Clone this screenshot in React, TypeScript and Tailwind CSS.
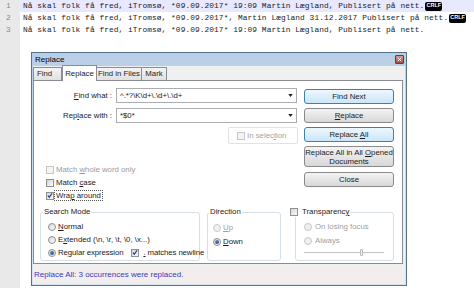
import React from "react";

const sans = "font-['Liberation_Sans',Arial,sans-serif]";
const mono = "font-['Liberation_Mono','Courier_New',monospace]";

function U({ children }: { children: React.ReactNode }) {
  return <span className="underline underline-offset-[1px] decoration-[0.5px]">{children}</span>;
}

function Checkbox({ checked, disabled }: { checked?: boolean; disabled?: boolean }) {
  return (
    <span
      className={`inline-flex w-[8px] h-[8px] shrink-0 items-center justify-center border ${
        disabled
          ? "border-[#c6c6c6] bg-[#f4f4f4]"
          : "border-[#8e8f8f] bg-gradient-to-br from-[#d6d6d6] to-[#fafafa]"
      }`}
    >
      {checked && (
        <svg viewBox="0 0 8 8" className="w-[7px] h-[7px]">
          <path d="M1.3 4.3 L3 6.3 L6.7 1.2" stroke="#1d3b8c" strokeWidth="1.5" fill="none" />
        </svg>
      )}
    </span>
  );
}

function Radio({ checked, disabled }: { checked?: boolean; disabled?: boolean }) {
  return (
    <span
      className={`inline-flex w-[8px] h-[8px] shrink-0 items-center justify-center rounded-full border ${
        disabled
          ? "border-[#c8c8c8] bg-[#f0f0f0]"
          : "border-[#8e8f8f] bg-gradient-to-br from-[#d8d8d8] to-[#fbfbfb]"
      }`}
    >
      {checked && <span className="w-[4px] h-[4px] rounded-full bg-gradient-to-br from-[#6f9bd0] to-[#1b3f7a]" />}
    </span>
  );
}

function Btn({
  children,
  primary,
  tall,
}: {
  children: React.ReactNode;
  primary?: boolean;
  tall?: boolean;
}) {
  return (
    <div
      className={`flex items-center justify-center text-center rounded-[3px] border leading-[9px] ${
        tall ? "h-[21px]" : "h-[15px]"
      } ${
        primary
          ? "border-[#3c7fb1] bg-gradient-to-b from-[#eef7fd] to-[#c9e6f8]"
          : "border-[#8a8a8a] bg-gradient-to-b from-[#f4f4f4] to-[#d8d8d8]"
      }`}
    >
      {children}
    </div>
  );
}

function Combo({ value }: { value: string }) {
  return (
    <div className="flex items-center w-[181px] h-[15px] border border-[#abadb3] bg-white pl-[3px] pr-[3px]">
      <span className="flex-1 whitespace-nowrap">{value}</span>
      <svg viewBox="0 0 6 4" className="w-[5px] h-[3px]">
        <path d="M0 0 H6 L3 4 Z" fill="#222" />
      </svg>
    </div>
  );
}

function Crlf() {
  return (
    <span
      className={`${sans} inline-flex items-center justify-center ml-[1px] h-[9px] w-[17px] rounded-[2px] bg-black text-white text-[5.5px] font-bold leading-none tracking-normal`}
    >
      CRLF
    </span>
  );
}

function Group({
  label,
  className,
  labelClass,
  boxClass,
  children,
}: {
  label: React.ReactNode;
  className: string;
  labelClass: string;
  boxClass: string;
  children: React.ReactNode;
}) {
  return (
    <div className={`flex flex-col ${className}`}>
      <div className="h-[10px] flex relative z-10">
        <div className={`flex items-center gap-[4px] bg-white h-[10px] leading-[10px] ${labelClass}`}>{label}</div>
      </div>
      <div className={`-mt-[5px] h-[49px] border border-[#d5dfe5] rounded-[3px] ${boxClass}`}>{children}</div>
    </div>
  );
}

const line1 = "Nå skal folk få fred, iTromsø, *09.09.2017* 19:09 Martin Lægland, Publisert på nett.";
const line2 = "Nå skal folk få fred, iTromsø, *09.09.2017*, Martin Lægland 31.12.2017 Publisert på nett.";

export default function App() {
  return (
    <div className="relative w-[474px] h-[288px] overflow-hidden bg-white">
      {/* Editor */}
      <div className={`${mono} flex h-full text-[7.85px] tracking-[0.07px] text-[#1c1c1c]`}>
        <div className="w-[20px] h-full bg-[#e9e9e9] flex flex-col pl-[6px] text-[#8a8a8a]">
          {[1, 2, 3].map((n) => (
            <div key={n} className="h-[12px] leading-[12px]">
              {n}
            </div>
          ))}
        </div>
        <div className="flex-1 flex flex-col">
          <div className="h-[12px] bg-[#e8e8ff] flex items-center pl-[3px] whitespace-pre">
            {line1}
            <Crlf />
          </div>
          <div className="h-[12px] flex items-center pl-[3px] whitespace-pre">
            {line2}
            <Crlf />
          </div>
          <div className="h-[12px] flex items-center pl-[3px] whitespace-pre">{line1}</div>
        </div>
      </div>

      {/* Replace dialog window */}
      <div
        className={`${sans} absolute left-[31px] top-[52px] w-[376px] h-[234px] flex flex-col border border-[#56738c] bg-gradient-to-b from-[#b9cfe7] to-[#d7e5f3] text-[7.8px] text-[#1b1b1b]`}
      >
        {/* title bar */}
        <div className="h-[13px] flex items-center pl-[3px] pr-[2px]">
          <span className="flex-1 text-[8px] text-black">Replace</span>
          <div className="w-[9px] h-[9px] rounded-[1px] border border-[#6d3a35] bg-gradient-to-b from-[#d9978d] to-[#a84a3f] flex items-center justify-center">
            <svg viewBox="0 0 6 6" className="w-[5px] h-[5px]">
              <path d="M1 1 L5 5 M5 1 L1 5" stroke="#fff" strokeWidth="1.2" />
            </svg>
          </div>
        </div>

        {/* body */}
        <div className="flex-1 mx-[1px] mb-[1px] bg-[#f0f0f0] flex flex-col">
          {/* tabs */}
          <div className="h-[14px] flex items-end relative z-10">
            <div className="h-[13px] w-[29px] flex items-center pl-[3px] border border-b-0 border-[#898c95] bg-gradient-to-b from-[#f4f4f4] to-[#e1e1e1]">
              Find
            </div>
            <div className="h-[16px] w-[35px] -mb-[1px] flex items-center justify-center border border-b-0 border-[#898c95] bg-white">
              Replace
            </div>
            <div className="h-[13px] w-[45px] flex items-center justify-center border border-b-0 border-l-0 border-[#898c95] bg-gradient-to-b from-[#f4f4f4] to-[#e1e1e1]">
              Find in Files
            </div>
            <div className="h-[13px] w-[25px] flex items-center justify-center border border-b-0 border-l-0 border-[#898c95] bg-gradient-to-b from-[#f4f4f4] to-[#e1e1e1]">
              Mark
            </div>
          </div>

          {/* tab panel */}
          <div className="w-[370px] h-[184px] border border-[#898c95] bg-white flex flex-col">
            <div className="flex pt-[7px]">
              {/* left column */}
              <div className="w-[263px] flex flex-col">
                <div className="flex items-center h-[15px]">
                  <span className="w-[78px] text-right whitespace-pre">
                    <U>F</U>ind what :
                  </span>
                  <span className="w-[4px]" />
                  <Combo value={"^.*?\\K\\d+\\.\\d+\\.\\d+"} />
                </div>
                <div className="h-[5px]" />
                <div className="flex items-center h-[15px]">
                  <span className="w-[78px] text-right whitespace-pre">
                    Rep<U>l</U>ace with :
                  </span>
                  <span className="w-[4px]" />
                  <Combo value={"*$0*"} />
                </div>
                <div className="self-end mt-[4px] mr-[-1px] w-[70px] h-[17px] rounded-[2px] border border-[#e2e2e2] flex items-center pl-[8px] gap-[2px] text-[#a2a2a2]">
                  <Checkbox disabled />
                  <span>
                    In selec<U>t</U>ion
                  </span>
                </div>
                <div className="mt-[19px] pl-[12px] flex flex-col">
                  <div className="h-[13px] flex items-center gap-[2px] text-[#9a9a9a]">
                    <Checkbox disabled />
                    <span>
                      Match <U>w</U>hole word only
                    </span>
                  </div>
                  <div className="h-[13px] flex items-center gap-[2px]">
                    <Checkbox />
                    <span>
                      Match <U>c</U>ase
                    </span>
                  </div>
                  <div className="h-[13px] flex items-center gap-[1px]">
                    <Checkbox checked />
                    <span className="outline outline-1 outline-dotted outline-[#555] px-[1px] leading-[9px]">
                      Wra<U>p</U> around
                    </span>
                  </div>
                </div>
              </div>

              {/* buttons */}
              <div className="ml-[7px] w-[90px] flex flex-col pt-[1px]">
                <Btn primary>Find Next</Btn>
                <div className="h-[4px]" />
                <Btn>
                  <span>
                    <U>R</U>eplace
                  </span>
                </Btn>
                <div className="h-[4px]" />
                <Btn primary>
                  <span>
                    Replace <U>A</U>ll
                  </span>
                </Btn>
                <div className="h-[4px]" />
                <Btn tall>
                  <span>
                    Replace All in All <U>O</U>pened
                    <br />
                    Documents
                  </span>
                </Btn>
                <div className="h-[5px]" />
                <Btn>Close</Btn>
              </div>
            </div>

            {/* group boxes */}
            <div className="flex mt-[5px]">
              <Group
                className="ml-[6px] w-[160px]"
                labelClass="ml-[3px] px-[1px]"
                boxClass="pl-[7px] pt-[7px]"
                label="Search Mode"
              >
                <div className="flex flex-col whitespace-nowrap">
                  <div className="h-[13px] flex items-center gap-[2px]">
                    <Radio />
                    <span>
                      <U>N</U>ormal
                    </span>
                  </div>
                  <div className="h-[13px] flex items-center gap-[2px]">
                    <Radio />
                    <span>
                      E<U>x</U>tended (\n, \r, \t, \0, \x...)
                    </span>
                  </div>
                  <div className="h-[13px] flex items-center gap-[2px] tracking-[-0.1px]">
                    <Radio checked />
                    <span>Re<U>g</U>ular expression</span>
                    <span className="w-[4px] shrink-0" />
                    <Checkbox checked />
                    <span className="ml-[2px]">
                      <U>.</U> matches newline
                    </span>
                  </div>
                </div>
              </Group>

              <Group
                className="ml-[7px] w-[74px]"
                labelClass="ml-[2px] px-[1px]"
                boxClass="pl-[5px] pt-[8px]"
                label="Direction"
              >
                <div className="flex flex-col">
                  <div className="h-[14px] flex items-center gap-[2px] text-[#a0a0a0]">
                    <Radio disabled />
                    <span>
                      <U>U</U>p
                    </span>
                  </div>
                  <div className="h-[14px] flex items-center gap-[2px]">
                    <Radio checked />
                    <span>
                      <U>D</U>own
                    </span>
                  </div>
                </div>
              </Group>

              <Group
                className="ml-[14px] w-[99px]"
                labelClass="-ml-[5px] pr-[1px]"
                boxClass="pl-[8px] pt-[7px]"
                label={
                  <>
                    <Checkbox />
                    <span>
                      Transparenc<U>y</U>
                    </span>
                  </>
                }
              >
                <div className="flex flex-col text-[#a0a0a0]">
                  <div className="h-[14px] flex items-center gap-[3px]">
                    <Radio disabled />
                    <span>On losing focus</span>
                  </div>
                  <div className="h-[14px] flex items-center gap-[3px]">
                    <Radio disabled />
                    <span>Always</span>
                  </div>
                  <div className="h-[8px] w-[80px] flex items-center">
                    <div className="relative w-full h-[1px] bg-[#c4c4c4]">
                      <div className="absolute left-[56px] -top-[3px] w-[3px] h-[7px] rounded-[1px] border border-[#b8b8b8] bg-[#f4f4f4]" />
                    </div>
                  </div>
                </div>
              </Group>
            </div>
          </div>

          {/* status bar */}
          <div className="mt-[3px] w-[370px] h-[16px] bg-[#f3eeee] flex items-center pl-[1px] text-[8px] text-[#3838c8]">
            Replace All: 3 occurrences were replaced.
          </div>
        </div>
      </div>
    </div>
  );
}
